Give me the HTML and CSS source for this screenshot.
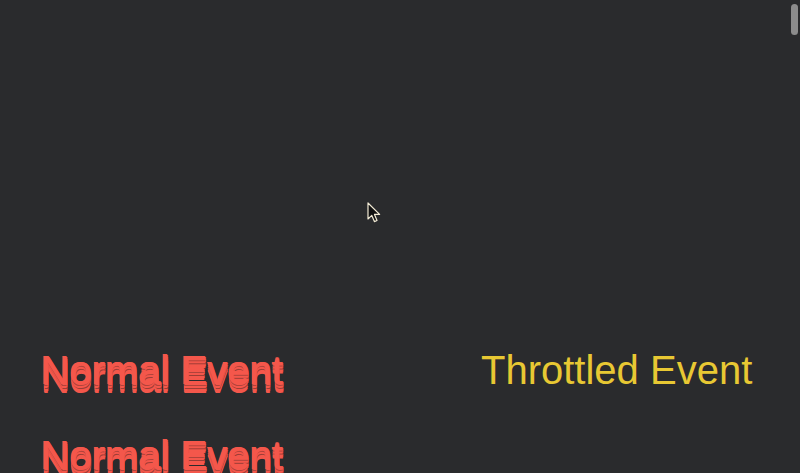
FILE: index.html
```html
<!DOCTYPE html>
<html>
<head>
<meta charset="utf-8">
<link rel="stylesheet" href="styles.css">
</head>
<body>
<main class="stage">
  <section class="col col-normal">
    <div class="event event-normal">Normal Event</div>
    <div class="event event-normal">Normal Event</div>
  </section>
  <section class="col col-throttled">
    <div class="event event-throttled">Throttled Event</div>
  </section>
</main>
<div class="scroll-thumb"></div>
<svg class="cursor" width="14" height="22" viewBox="0 0 14 22">
  <path d="M1 1 L1 17 L4.8 13.4 L7.4 19.6 L10 18.5 L7.5 12.4 L12.6 12.4 Z" fill="#111" stroke="#f3ecd6" stroke-width="1.2" stroke-linejoin="round"/>
</svg>
</body>
</html>
```
FILE: styles.css
```css
html, body {
  margin: 0;
  padding: 0;
  height: 100%;
  overflow: hidden;
  background: #2a2b2d;
}
.stage {
  display: flex;
  padding: 347px 0 0 40px;
  font-family: "Liberation Sans", Arial, sans-serif;
  font-size: 40px;
  line-height: 46px;
}
.col {
  display: flex;
  flex-direction: column;
  gap: 39px;
}
.col-normal {
  width: 441px;
}
.event {
  white-space: nowrap;
}
.event-normal {
  color: #f4574b;
  text-shadow:
    0.7px 0 0 #f4574b,
    1.4px 1px 0 #f4574b,
    0.7px 2px 0 #b0433b,
    1.4px 3px 0 #f4574b,
    0.7px 4px 0 #f4574b,
    1.4px 5px 0 #9c3d36,
    0.7px 6px 0 #f4574b,
    1.4px 7px 0 #f4574b,
    0.7px 8px 0 #f4574b,
    1px 9px 0 #f4574b;
}
.event-throttled {
  color: #e8c833;
}
.scroll-thumb {
  position: absolute;
  top: 4px;
  right: 2px;
  width: 7px;
  height: 31px;
  border-radius: 4px;
  background: #8c8c8c;
}
.cursor {
  position: absolute;
  left: 367px;
  top: 202px;
}
```
